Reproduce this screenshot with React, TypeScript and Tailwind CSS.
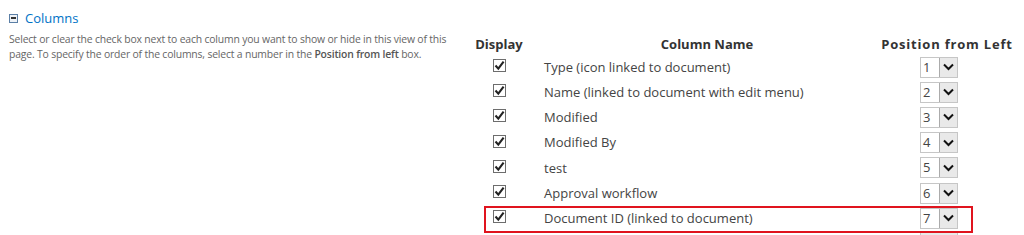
import React from "react";

const rows = [
  "Type (icon linked to document)",
  "Name (linked to document with edit menu)",
  "Modified",
  "Modified By",
  "test",
  "Approval workflow",
  "Document ID (linked to document)",
];

function Check() {
  return (
    <div className="w-[13px] h-[13px] border border-[#6d6d6d] bg-white flex items-center justify-center">
      <svg width="11" height="11" viewBox="0 0 11 11">
        <path d="M1.5 5.5 L4.3 8.6 L9.6 1.6" fill="none" stroke="#222" strokeWidth="2.1" />
      </svg>
    </div>
  );
}

function Sel({ n }: { n: number }) {
  return (
    <div className="flex h-[21px] w-[38px] border border-[#c6c6c6] bg-white">
      <div className="w-[18px] flex items-center pl-[2px] text-[13px] text-[#444] leading-none">{n}</div>
      <div className="flex-1 bg-[#e9e9e9] border-l border-[#ababab] flex items-center justify-center">
        <svg width="11" height="8" viewBox="0 0 11 8">
          <path d="M1 1.5 L5.5 6 L10 1.5" fill="none" stroke="#111" strokeWidth="2" />
        </svg>
      </div>
    </div>
  );
}

export default function App() {
  return (
    <div
      className="relative w-[1024px] h-[235px] overflow-hidden bg-white flex"
      style={{ fontFamily: '"Open Sans", "Noto Sans", sans-serif' }}
    >
      <div className="w-[471px] pl-[9px] pt-[10px]">
        <div className="flex items-center gap-[7px] h-[16px]">
          <div className="w-[9px] h-[9px] border border-[#5b7fa6] bg-[#eef2f7] flex items-center justify-center">
            <div className="w-[5px] h-[1.5px] bg-[#333]" />
          </div>
          <span className="text-[13px] text-[#0072c6] leading-none">Columns</span>
        </div>
        <p className="mt-[6px] text-[10.4px] leading-[14.5px] text-[#666] pr-[10px] tracking-[-0.17px]">
          Select or clear the check box next to each column you want to show or hide in this view of this
          page. To specify the order of the columns, select a number in the{" "}
          <b className="font-semibold text-[#555]">Position from left</b> box.
        </p>
      </div>
      <div className="pt-[34px]">
        <div className="grid grid-cols-[56px_360px_120px] h-[21px] text-[13px] font-bold text-[#333] leading-[20px]">
          <div className="text-center">Display</div>
          <div className="text-center">Column Name</div>
          <div className="flex justify-center whitespace-nowrap tracking-[0.8px]">
            <span>Position from Left</span>
          </div>
        </div>
        {rows.map((r, i) => (
          <div key={r} className="grid grid-cols-[56px_360px_120px] h-[25.2px] items-center">
            <div className="flex justify-center -mt-[4px]">
              <Check />
            </div>
            <div className="pl-[17px] text-[13px] text-[#444]">{r}</div>
            <div className="pl-[33px] -mt-[1px]">
              <Sel n={i + 1} />
            </div>
          </div>
        ))}
        <div className="grid grid-cols-[56px_360px_120px] h-[25px] items-start">
          <div />
          <div />
          <div className="pl-[33px]">
            <div className="h-[21px] w-[38px] border border-[#c6c6c6] bg-[#e9e9e9]" />
          </div>
        </div>
      </div>
      <div className="absolute left-[484px] top-[206px] w-[489px] h-[27px] border-2 border-[#e0141e]" />
    </div>
  );
}
